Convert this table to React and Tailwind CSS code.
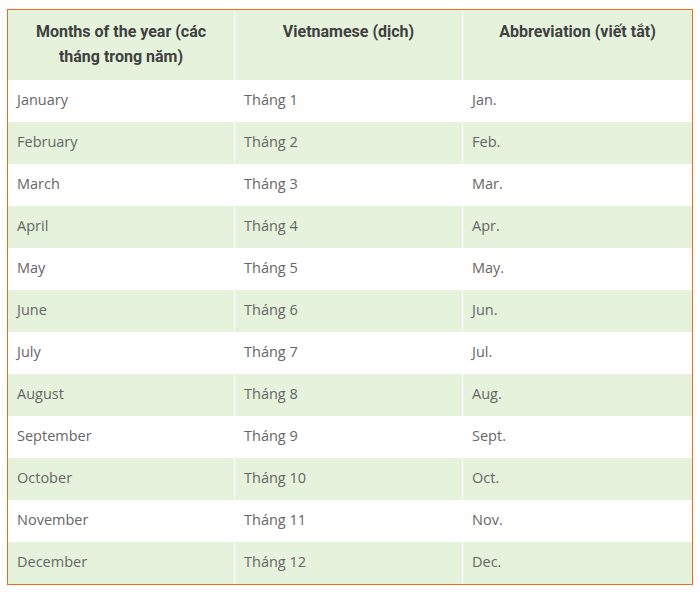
import React from "react";

const rows = [
  ["January", "Tháng 1", "Jan."],
  ["February", "Tháng 2", "Feb."],
  ["March", "Tháng 3", "Mar."],
  ["April", "Tháng 4", "Apr."],
  ["May", "Tháng 5", "May."],
  ["June", "Tháng 6", "Jun."],
  ["July", "Tháng 7", "Jul."],
  ["August", "Tháng 8", "Aug."],
  ["September", "Tháng 9", "Sept."],
  ["October", "Tháng 10", "Oct."],
  ["November", "Tháng 11", "Nov."],
  ["December", "Tháng 12", "Dec."],
];

export default function App() {
  return (
    <div className="w-[700px] h-[592px] bg-white pt-[9px] pl-[7px]">
      <div className="w-[686px] border border-[#f26a1b] bg-white">
        <div className="grid grid-cols-[226px_227px_229px] gap-x-px bg-white">
          {["Months of the year (các tháng trong năm)", "Vietnamese (dịch)", "Abbreviation (viết tắt)"].map((h, i) => (
            <div
              key={i}
              className="h-[70px] bg-[#e5f2dc] px-[12px] pt-[9px] text-center text-[16px] leading-[25px] font-bold text-[#404040]"
              style={{ fontFamily: "Roboto, 'Liberation Sans', sans-serif" }}
            >
              {h}
            </div>
          ))}
        </div>
        {rows.map((r, idx) => (
          <div key={idx} className="grid grid-cols-[226px_227px_229px] gap-x-px bg-white">
            {r.map((c, j) => (
              <div
                key={j}
                className={`h-[42px] flex items-center pl-[9px] pb-[3px] text-[14.5px] text-[#666666] ${idx % 2 === 1 ? "bg-[#e5f2dc]" : "bg-white"}`}
                style={{ fontFamily: "'Open Sans', 'Noto Sans', sans-serif" }}
              >
                {c}
              </div>
            ))}
          </div>
        ))}
      </div>
    </div>
  );
}
